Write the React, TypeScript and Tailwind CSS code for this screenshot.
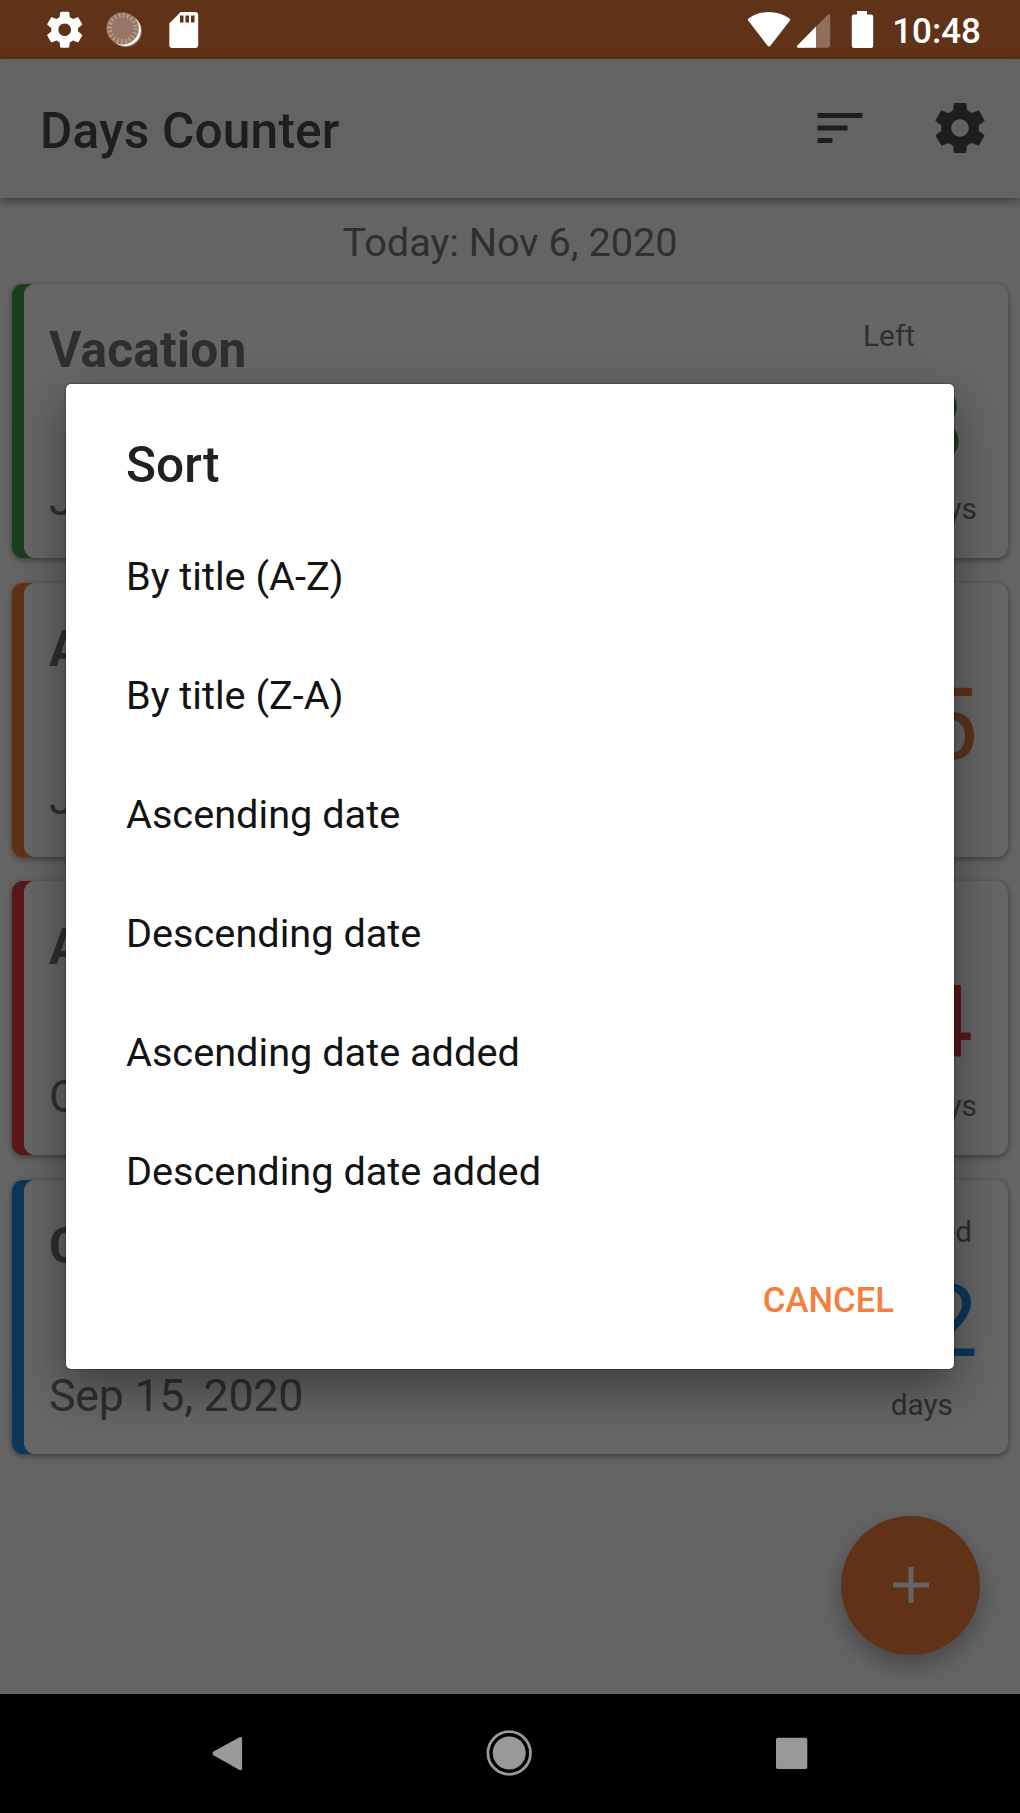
import React from 'react';
import { MdSort } from 'react-icons/md';
import clsx from 'clsx';

const sortOptions = [
  'By title (A-Z)',
  'By title (Z-A)',
  'Ascending date',
  'Descending date',
  'Ascending date added',
  'Descending date added',
];

const events = [
  {
    title: 'Vacation',
    date: 'Jul 14, 2021',
    status: 'Left',
    value: '8',
    unit: 'days',
    stripe: 'bg-[#439f47]',
    color: 'text-[#439f47]',
    statusPad: 'pr-[93px]',
    valuePad: 'pr-[44px]',
    unitPad: 'pr-[31px]',
  },
  {
    title: 'Anniversary',
    date: 'Jul 29, 2021',
    status: 'Left',
    value: '265',
    unit: 'days',
    stripe: 'bg-[#f07d3c]',
    color: 'text-[#f07d3c]',
    statusPad: 'pr-[90px]',
    valuePad: 'pr-[30px]',
    unitPad: 'pr-[85px]',
  },
  {
    title: 'Annual report',
    date: 'Oct 2, 2020',
    status: 'Left',
    value: '4',
    unit: 'days',
    stripe: 'bg-[#e03c3c]',
    color: 'text-[#e03c3c]',
    statusPad: 'pr-[90px]',
    valuePad: 'pr-[35px]',
    unitPad: 'pr-[31px]',
  },
  {
    title: 'Course',
    date: 'Sep 15, 2020',
    status: 'Passed',
    value: '52',
    unit: 'days',
    stripe: 'bg-[#1f89e5]',
    color: 'text-[#1f89e5]',
    statusPad: 'pr-[36px]',
    valuePad: 'pr-[30px]',
    unitPad: 'pr-[55px]',
  },
];

const StatusBar = () => (
  <div className="h-[59px] bg-[#603218] shrink-0">
    <svg width="1020" height="59" viewBox="0 0 1020 59" fill="#fff">
      {/* settings */}
      <path
        transform="translate(43.1 8.2) scale(1.8)"
        d="M19.43 12.98c.04-.32.07-.64.07-.98s-.03-.66-.07-.98l2.11-1.65c.19-.15.24-.42.12-.64l-2-3.46c-.12-.22-.39-.3-.61-.22l-2.49 1c-.52-.4-1.08-.73-1.69-.98l-.38-2.65C14.46 2.18 14.25 2 14 2h-4c-.25 0-.46.18-.49.42l-.38 2.65c-.61.25-1.17.59-1.69.98l-2.49-1c-.23-.09-.49 0-.61.22l-2 3.46c-.13.22-.07.49.12.64l2.11 1.65c-.04.32-.07.65-.07.98s.03.66.07.98l-2.11 1.65c-.19.15-.24.42-.12.64l2 3.46c.12.22.39.3.61.22l2.49-1c.52.4 1.08.73 1.69.98l.38 2.65c.03.24.24.42.49.42h4c.25 0 .46-.18.49-.42l.38-2.65c.61-.25 1.17-.59 1.69-.98l2.49 1c.23.09.49 0 .61-.22l2-3.46c.12-.22.07-.49-.12-.64l-2.11-1.65zM12 15.5c-1.93 0-3.5-1.57-3.5-3.5s1.57-3.5 3.5-3.5 3.5 1.57 3.5 3.5-1.57 3.5-3.5 3.5z"
      />
      {/* progress */}
      <circle cx="125.8" cy="31" r="16" fillOpacity=".4" />
      <circle cx="125" cy="30.2" r="15.8" />
      <circle cx="122.6" cy="28.4" r="16.2" fill="#967665" />
      <circle cx="122.6" cy="28.4" r="13" fill="none" stroke="#b9a398" strokeWidth="4.6" strokeDasharray="1.5 2.58" />
      {/* sd card */}
      <path d="M180.5 12h14.5a3.2 3.2 0 0 1 3.2 3.2v29.6a3 3 0 0 1-3.2 3.2h-22.500a3.2 3.2 0 0 1-3.2-3.2V23.5z" />
      <path fill="#603218" d="M180 15.5h3.5v7H180zM185.5 15.5h3.5v7h-3.500zM191 15.5h3.5v7H191z" />
      {/* wifi */}
      <path d="M748.5 21c-1-1-.8-2 .3-2.8C755 14 762 12 769 12s14 2 20.3 6.200c1.1.8 1.3 1.8.3 2.800l-19 24.500c-1 1.200-2.200 1.200-3.200 0z" />
      {/* signal */}
      <path d="M797.5 45.500L827.5 15c1.200-1.200 2.700-.6 2.700 1V45a2.700 2.700 0 0 1-2.700 2.700H798.500c-1.700 0-2.200-1-1-2.200z" fillOpacity=".3" />
      <path d="M797.5 45.500L816 26.500V47.700H798.500c-1.700 0-2.200-1-1-2.200z" />
      {/* battery */}
      <path d="M857 11h10v3.500h4a2.200 2.200 0 0 1 2.200 2.200v29a2.200 2.200 0 0 1-2.200 2.200h-17a2.200 2.200 0 0 1-2.200-2.200v-29a2.200 2.200 0 0 1 2.200-2.200h3z" />
      <text x="892.2" y="43" fontSize="35" fontWeight="500">10:48</text>
    </svg>
  </div>
);

const Header = () => (
  <header className="relative h-[139px] flex items-center pl-[40px] pr-[30px] bg-[#f8f8f8] shadow-[0_3px_9px_rgba(0,0,0,0.4)] text-[#4b4b4b] shrink-0">
    <h1 className="flex-1 text-[49.6px] font-medium leading-none tracking-[0.2px] pt-[6px]">Days Counter</h1>
    <MdSort className="w-[60px] h-[60px] mr-[60px] mb-[2px]" />
    <svg className="w-[60px] h-[60px] mb-[2px]" viewBox="0 0 24 24" fill="currentColor">
      <path d="M19.44 12.99l.01-.02c.04-.33.08-.67.08-1.01 0-.34-.03-.66-.07-.99l.01.02 2.44-1.92-2.43-4.22-2.87 1.16.01.01c-.52-.4-1.09-.74-1.71-1h.01L14.44 2H9.57l-.44 3.07h.01c-.62.26-1.19.6-1.71 1l.01-.01-2.88-1.17-2.44 4.22 2.44 1.92.01-.02c-.04.33-.07.65-.07.99 0 .34.03.68.08 1.01l.01.02-2.1 1.65-.33.26 2.43 4.2 2.88-1.15-.02-.04c.53.41 1.1.75 1.73 1.01h-.03L9.58 22h4.85s.03-.18.06-.42l.38-2.65h-.01c.62-.26 1.2-.6 1.73-1.01l-.02.04 2.88 1.15 2.43-4.2s-.14-.12-.33-.26l-2.11-1.66zM12 15.5c-1.93 0-3.5-1.57-3.5-3.5s1.57-3.5 3.5-3.5 3.5 1.57 3.5 3.5-1.57 3.5-3.5 3.5z" />
    </svg>
  </header>
);

const EventCard = ({ event }: { event: (typeof events)[number] }) => (
  <article
    className={clsx(
      'h-[274px] pl-[12px] rounded-[11px] shadow-[0_2px_6px_rgba(0,0,0,0.4)]',
      event.stripe,
    )}
  >
    <div className="h-full flex justify-between pl-[25px] rounded-[11px] bg-white text-[#757575]">
      <div className="flex flex-col justify-between pt-[37px] pb-[32px]">
        <h2 className="text-[49.6px] leading-[58px] font-bold tracking-[0.2px]">{event.title}</h2>
        <p className="text-[44.6px] leading-[52px] tracking-[-0.2px]">{event.date}</p>
      </div>
      <div className="flex flex-col items-end pt-[34px] text-[29.8px] leading-[35px]">
        <p className={event.statusPad}>{event.status}</p>
        <p className={clsx('mt-[15px] text-[99.2px] leading-[116px]', event.color, event.valuePad)}>
          {event.value}
        </p>
        <p className={clsx('mt-[7px]', event.unitPad)}>{event.unit}</p>
      </div>
    </div>
  </article>
);

const SortDialog = () => (
  <div className="absolute inset-x-0 top-[59px] bottom-[119px] bg-black/60 px-[66px] pt-[325px]">
    <div
      role="dialog"
      className="h-[985px] rounded-[5px] bg-white px-[60px] pt-[52px] shadow-[0_0_2px_rgba(0,0,0,0.7),0_18px_50px_rgba(0,0,0,0.42)]"
    >
      <h2 className="text-[49.6px] leading-[58px] font-medium text-[#212121]">Sort</h2>
      <ul className="mt-[23px] text-[39.7px] text-[#131313]">
        {sortOptions.map((option) => (
          <li key={option} className="h-[119px] flex items-center">
            {option}
          </li>
        ))}
      </ul>
      <div className="mt-[49px] flex justify-end">
        <button className="text-[34.7px] leading-[40px] font-medium text-[#f5803e]">CANCEL</button>
      </div>
    </div>
  </div>
);

const NavigationBar = () => (
  <nav className="h-[119px] bg-black shrink-0">
    <svg width="1020" height="119" viewBox="0 0 1020 119" fill="#999">
      <path d="M213.5 57.500L239.5 43.200c1.500-.8 2.600 0 2.600 1.400v30c0 1.500-1.100 2.200-2.600 1.400L213.5 61.300c-1.200-.8-1.200-3 0-3.800z" />
      <circle cx="509.2" cy="59" r="21.3" fill="none" stroke="#999" strokeWidth="2.8" />
      <circle cx="509.2" cy="59" r="16.5" />
      <rect x="776" y="43.7" width="31.3" height="31.3" rx="2" />
    </svg>
  </nav>
);

const App = () => {
  return (
    <div className="relative w-[1020px] h-[1813px] flex flex-col overflow-hidden font-['Roboto',sans-serif]">
      <StatusBar />
      <Header />
      <main className="flex-1 bg-[#fafafa] px-[12px] pt-[21px]">
        <p className="h-[65px] text-center text-[39.7px] leading-[48px] text-[#757575]">
          Today: Nov 6, 2020
        </p>
        <div className="flex flex-col gap-[24.5px]">
          {events.map((event) => (
            <EventCard key={event.title} event={event} />
          ))}
        </div>
        <div className="flex justify-end mt-[62px] pr-[28px]">
          <button className="w-[139px] h-[139px] rounded-full bg-[#f07d3c] flex items-center justify-center shadow-[0_10px_24px_rgba(0,0,0,0.3)]">
            <svg width="36" height="36" viewBox="0 0 36 36" fill="#fafafa">
              <path d="M15.5 0h5v15.500H36v5H20.500V36h-5V20.500H0v-5h15.500z" />
            </svg>
          </button>
        </div>
      </main>
      <NavigationBar />
      <SortDialog />
    </div>
  );
};

export default App;
